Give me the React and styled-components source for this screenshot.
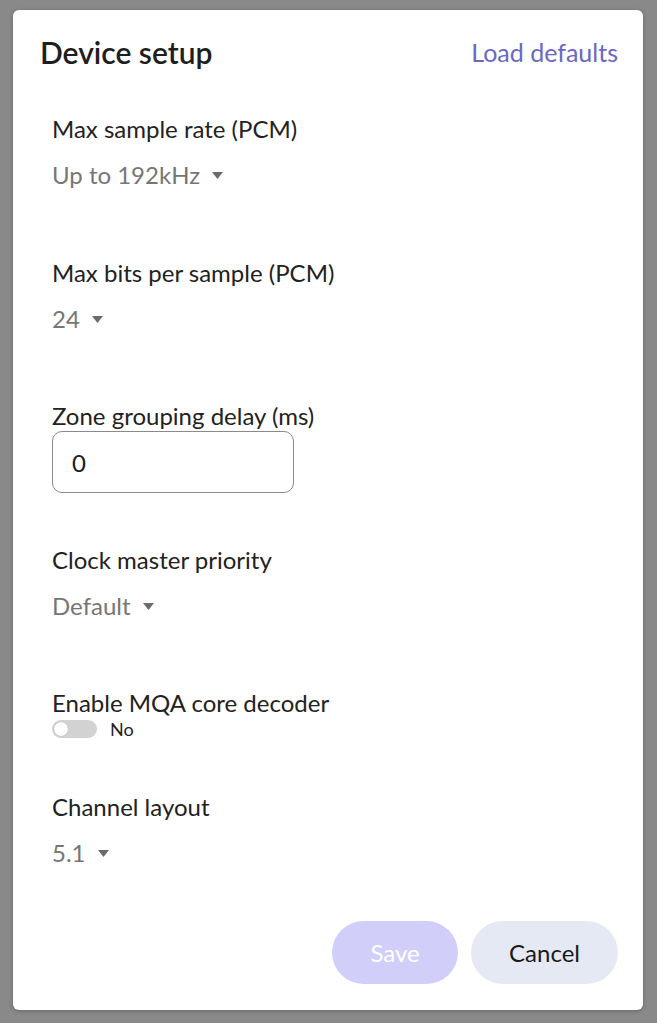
import React from 'react';
import styled, { createGlobalStyle } from 'styled-components';

const Global = createGlobalStyle`
  html, body {
    margin: 0;
    padding: 0;
    background: #898989;
    font-family: Lato, "Noto Sans", sans-serif;
  }
`;

const Page = styled.div`
  height: 1023px;
  padding: 10px 14px 13px 13px;
  box-sizing: border-box;
`;

const Card = styled.div`
  height: 1000px;
  background: #fff;
  border-radius: 6px;
  box-shadow: 0 1px 4px rgba(0, 0, 0, 0.25);
  padding: 26px 25px 26px 27px;
  box-sizing: border-box;
  display: flex;
  flex-direction: column;
`;

const Header = styled.div`
  display: flex;
  align-items: center;
  justify-content: space-between;
  height: 32px;
`;

const Title = styled.h1`
  margin: 0;
  font-size: 30px;
  font-weight: 600;
  color: #1e1e1e;
`;

const LinkButton = styled.button`
  border: 0;
  background: none;
  padding: 0;
  font: inherit;
  font-size: 25px;
  color: #6a68c4;
  cursor: pointer;
`;

const Fields = styled.div`
  margin-top: 47px;
  padding-left: 12px;
  display: flex;
  flex-direction: column;
`;

const Field = styled.div`
  min-height: ${p => p.$h}px;
`;

const Label = styled.div`
  font-size: 24px;
  line-height: 28px;
  color: #222;
`;

const Select = styled.div`
  margin-top: 18px;
  display: inline-flex;
  align-items: center;
  gap: 12px;
  font-size: 24px;
  line-height: 28px;
  color: #767676;
  cursor: pointer;
`;

const Input = styled.input`
  display: block;
  margin-top: 1px;
  width: 242px;
  height: 62px;
  box-sizing: border-box;
  border: 1.5px solid #8a8a8a;
  border-radius: 10px;
  padding: 0 19px;
  font: inherit;
  font-size: 24px;
  color: #1a1a1a;
  outline: none;
`;

const ToggleRow = styled.div`
  display: flex;
  align-items: center;
  gap: 13px;
  margin-top: 1px;
`;

const Track = styled.div`
  width: 45px;
  height: 18px;
  border-radius: 9px;
  background: #d2d2d2;
  display: flex;
  align-items: center;
  padding: 0 2px;
  box-sizing: border-box;
`;

const Knob = styled.div`
  width: 14px;
  height: 14px;
  border-radius: 50%;
  background: #fff;
  box-shadow: 0 0 1px rgba(0, 0, 0, 0.3);
`;

const ToggleText = styled.span`
  font-size: 18px;
  color: #222;
`;

const Footer = styled.div`
  margin-top: auto;
  display: flex;
  justify-content: flex-end;
  gap: 13px;
`;

const Button = styled.button`
  height: 63px;
  width: ${p => p.$w}px;
  border: 0;
  border-radius: 32px;
  font: inherit;
  font-size: 24px;
  background: ${p => (p.$primary ? '#d1cffa' : '#e4e9f3')};
  color: ${p => (p.$primary ? '#fff' : '#1a1a1a')};
  cursor: pointer;
`;

const Caret = () => (
  <svg width="11" height="7" viewBox="0 0 11 7">
    <polygon points="0,0 11,0 5.5,7" fill="#6b6b6b" />
  </svg>
);

const Dropdown = ({ value }) => (
  <Select>
    {value}
    <Caret />
  </Select>
);

const App = () => {
  return (
    <>
      <Global />
      <Page>
        <Card>
          <Header>
            <Title>Device setup</Title>
            <LinkButton>Load defaults</LinkButton>
          </Header>
          <Fields>
            <Field $h={144}>
              <Label>Max sample rate (PCM)</Label>
              <Dropdown value="Up to 192kHz" />
            </Field>
            <Field $h={143}>
              <Label>Max bits per sample (PCM)</Label>
              <Dropdown value="24" />
            </Field>
            <Field $h={144}>
              <Label>Zone grouping delay (ms)</Label>
              <Input defaultValue="0" />
            </Field>
            <Field $h={143}>
              <Label>Clock master priority</Label>
              <Dropdown value="Default" />
            </Field>
            <Field $h={104}>
              <Label>Enable MQA core decoder</Label>
              <ToggleRow>
                <Track>
                  <Knob />
                </Track>
                <ToggleText>No</ToggleText>
              </ToggleRow>
            </Field>
            <Field>
              <Label>Channel layout</Label>
              <Dropdown value="5.1" />
            </Field>
          </Fields>
          <Footer>
            <Button $primary $w={126}>Save</Button>
            <Button $w={147}>Cancel</Button>
          </Footer>
        </Card>
      </Page>
    </>
  );
};

export default App;
